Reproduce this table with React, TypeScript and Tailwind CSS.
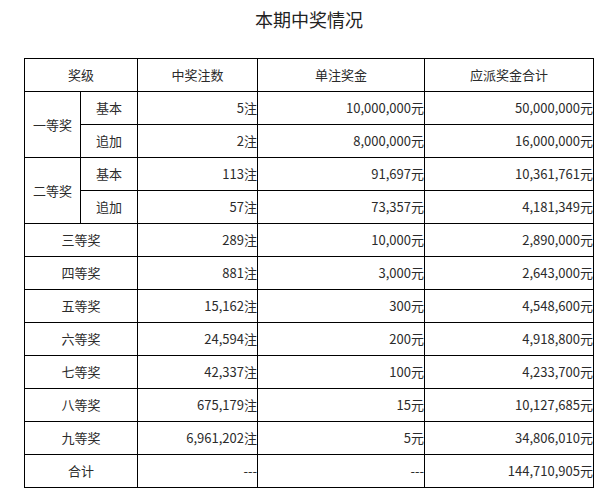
import React from 'react';

type Row = { label: string; sub?: string; count: string; unit: string; total: string };

const rows: Row[] = [
    { label: '一等奖', sub: '基本', count: '5注', unit: '10,000,000元', total: '50,000,000元' },
    { label: '一等奖', sub: '追加', count: '2注', unit: '8,000,000元', total: '16,000,000元' },
    { label: '二等奖', sub: '基本', count: '113注', unit: '91,697元', total: '10,361,761元' },
    { label: '二等奖', sub: '追加', count: '57注', unit: '73,357元', total: '4,181,349元' },
    { label: '三等奖', count: '289注', unit: '10,000元', total: '2,890,000元' },
    { label: '四等奖', count: '881注', unit: '3,000元', total: '2,643,000元' },
    { label: '五等奖', count: '15,162注', unit: '300元', total: '4,548,600元' },
    { label: '六等奖', count: '24,594注', unit: '200元', total: '4,918,800元' },
    { label: '七等奖', count: '42,337注', unit: '100元', total: '4,233,700元' },
    { label: '八等奖', count: '675,179注', unit: '15元', total: '10,127,685元' },
    { label: '九等奖', count: '6,961,202注', unit: '5元', total: '34,806,010元' },
    { label: '合计', count: '---', unit: '---', total: '144,710,905元' },
];

const cell = 'bg-white flex items-center h-[32px]';

export default function App() {
    return (
        <div className="w-[613px] h-[492px] bg-white text-[#2b2b2b]" style={{ fontFamily: '"Noto Sans CJK SC", "Noto Sans", sans-serif' }}>
            <div className="ml-[24px] w-[570px]">
                <h1 className="pt-[10px] text-center text-[18px] leading-[18px] font-normal text-[#222]">本期中奖情况</h1>
                <div className="mt-[30px] grid grid-cols-[55px_56px_119px_166px_168px] gap-px bg-black p-px text-[13px]">
                    <div className={`${cell} col-span-2 justify-center`}>奖级</div>
                    <div className={`${cell} justify-center`}>中奖注数</div>
                    <div className={`${cell} justify-center`}>单注奖金</div>
                    <div className={`${cell} justify-center`}>应派奖金合计</div>
                    {rows.map((r, i) => (
                        <React.Fragment key={i}>
                            {r.sub ? (
                                <>
                                    {r.sub === '基本' && (
                                        <div className="bg-white row-span-2 flex items-center justify-center">{r.label}</div>
                                    )}
                                    <div className={`${cell} justify-center`}>{r.sub}</div>
                                </>
                            ) : (
                                <div className={`${cell} col-span-2 justify-center`}>{r.label}</div>
                            )}
                            <div className={`${cell} justify-end`}>{r.count}</div>
                            <div className={`${cell} justify-end`}>{r.unit}</div>
                            <div className={`${cell} justify-end`}>{r.total}</div>
                        </React.Fragment>
                    ))}
                </div>
            </div>
        </div>
    );
}
